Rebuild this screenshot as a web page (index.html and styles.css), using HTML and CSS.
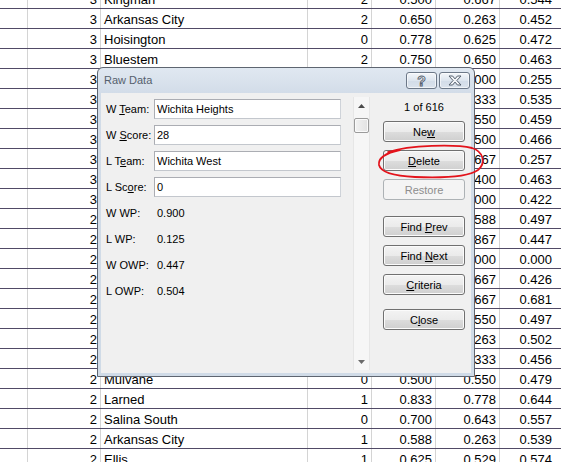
FILE: index.html
```html
<!DOCTYPE html>
<html>
<head>
<meta charset="utf-8">
<title>Raw Data</title>
<link rel="stylesheet" href="styles.css">
</head>
<body>
<div class="sheet">
  <div class="row"><div class="c"></div><div class="c r">3</div><div class="c t">Kingman</div><div class="c r">2</div><div class="c r">0.500</div><div class="c r">0.667</div><div class="c r g">0.544</div></div>
  <div class="row"><div class="c"></div><div class="c r">3</div><div class="c t">Arkansas City</div><div class="c r">2</div><div class="c r">0.650</div><div class="c r">0.263</div><div class="c r g">0.452</div></div>
  <div class="row"><div class="c"></div><div class="c r">3</div><div class="c t">Hoisington</div><div class="c r">0</div><div class="c r">0.778</div><div class="c r">0.625</div><div class="c r g">0.472</div></div>
  <div class="row"><div class="c"></div><div class="c r">3</div><div class="c t">Bluestem</div><div class="c r">2</div><div class="c r">0.750</div><div class="c r">0.650</div><div class="c r g">0.463</div></div>
  <div class="row"><div class="c"></div><div class="c r">3</div><div class="c t"></div><div class="c r"></div><div class="c r"></div><div class="c r">0.000</div><div class="c r g">0.255</div></div>
  <div class="row"><div class="c"></div><div class="c r">3</div><div class="c t"></div><div class="c r"></div><div class="c r"></div><div class="c r">0.333</div><div class="c r g">0.535</div></div>
  <div class="row"><div class="c"></div><div class="c r">3</div><div class="c t"></div><div class="c r"></div><div class="c r"></div><div class="c r">0.550</div><div class="c r g">0.459</div></div>
  <div class="row"><div class="c"></div><div class="c r">3</div><div class="c t"></div><div class="c r"></div><div class="c r"></div><div class="c r">0.500</div><div class="c r g">0.466</div></div>
  <div class="row"><div class="c"></div><div class="c r">3</div><div class="c t"></div><div class="c r"></div><div class="c r"></div><div class="c r">0.667</div><div class="c r g">0.257</div></div>
  <div class="row"><div class="c"></div><div class="c r">3</div><div class="c t"></div><div class="c r"></div><div class="c r"></div><div class="c r">0.400</div><div class="c r g">0.463</div></div>
  <div class="row"><div class="c"></div><div class="c r">3</div><div class="c t"></div><div class="c r"></div><div class="c r"></div><div class="c r">0.000</div><div class="c r g">0.422</div></div>
  <div class="row"><div class="c"></div><div class="c r">2</div><div class="c t"></div><div class="c r"></div><div class="c r"></div><div class="c r">0.588</div><div class="c r g">0.497</div></div>
  <div class="row"><div class="c"></div><div class="c r">2</div><div class="c t"></div><div class="c r"></div><div class="c r"></div><div class="c r">0.867</div><div class="c r g">0.447</div></div>
  <div class="row"><div class="c"></div><div class="c r">2</div><div class="c t"></div><div class="c r"></div><div class="c r"></div><div class="c r">0.000</div><div class="c r g">0.000</div></div>
  <div class="row"><div class="c"></div><div class="c r">2</div><div class="c t"></div><div class="c r"></div><div class="c r"></div><div class="c r">0.667</div><div class="c r g">0.426</div></div>
  <div class="row"><div class="c"></div><div class="c r">2</div><div class="c t"></div><div class="c r"></div><div class="c r"></div><div class="c r">0.667</div><div class="c r g">0.681</div></div>
  <div class="row"><div class="c"></div><div class="c r">2</div><div class="c t"></div><div class="c r"></div><div class="c r"></div><div class="c r">0.550</div><div class="c r g">0.497</div></div>
  <div class="row"><div class="c"></div><div class="c r">2</div><div class="c t"></div><div class="c r"></div><div class="c r"></div><div class="c r">0.263</div><div class="c r g">0.502</div></div>
  <div class="row"><div class="c"></div><div class="c r">2</div><div class="c t"></div><div class="c r"></div><div class="c r"></div><div class="c r">0.333</div><div class="c r g">0.456</div></div>
  <div class="row"><div class="c"></div><div class="c r">2</div><div class="c t">Mulvane</div><div class="c r">0</div><div class="c r">0.500</div><div class="c r">0.550</div><div class="c r g">0.479</div></div>
  <div class="row"><div class="c"></div><div class="c r">2</div><div class="c t">Larned</div><div class="c r">1</div><div class="c r">0.833</div><div class="c r">0.778</div><div class="c r g">0.644</div></div>
  <div class="row"><div class="c"></div><div class="c r">2</div><div class="c t">Salina South</div><div class="c r">0</div><div class="c r">0.700</div><div class="c r">0.643</div><div class="c r g">0.557</div></div>
  <div class="row"><div class="c"></div><div class="c r">2</div><div class="c t">Arkansas City</div><div class="c r">1</div><div class="c r">0.588</div><div class="c r">0.263</div><div class="c r g">0.539</div></div>
  <div class="row"><div class="c"></div><div class="c r">2</div><div class="c t">Ellis</div><div class="c r">1</div><div class="c r">0.625</div><div class="c r">0.529</div><div class="c r g">0.574</div></div>
</div>

<div class="dialog">
  <div class="titlebar">
    <div class="title">Raw Data</div>
    <div class="capbtn"><span class="qmark">?</span></div>
    <div class="capbtn">
      <svg class="xicon" width="14" height="11" viewBox="-1 -1 14 11"><path d="M0 0H3.6L6 2.9L8.4 0H12L7.9 4.5L12 9H8.4L6 6.1L3.6 9H0L4.1 4.5Z" fill="#f3f5f8" stroke="#55606e" stroke-width="1" stroke-linejoin="round"/></svg>
    </div>
  </div>
  <div class="body">
    <div class="form">
      <div class="lbl">W <u>T</u>eam:</div><div class="field">Wichita Heights</div>
      <div class="lbl">W <u>S</u>core:</div><div class="field">28</div>
      <div class="lbl">L T<u>e</u>am:</div><div class="field">Wichita West</div>
      <div class="lbl">L Sc<u>o</u>re:</div><div class="field">0</div>
      <div class="lbl">W WP:</div><div class="val">0.900</div>
      <div class="lbl">L WP:</div><div class="val">0.125</div>
      <div class="lbl">W OWP:</div><div class="val">0.447</div>
      <div class="lbl">L OWP:</div><div class="val">0.504</div>
    </div>
    <div class="scroll">
      <div class="arrow"><svg width="7" height="4" viewBox="0 0 7 4"><path d="M0 4H7L3.5 0Z" fill="#4a4a4a"/></svg></div>
      <div class="thumb"></div>
      <div class="spacer"></div>
      <div class="arrow down"><svg width="7" height="4" viewBox="0 0 7 4"><path d="M0 0H7L3.5 4Z" fill="#6a6a6a"/></svg></div>
    </div>
    <div class="side">
      <div class="count">1 of 616</div>
      <div class="btn first">Ne<u>w</u></div>
      <div class="btn"><u>D</u>elete</div>
      <div class="btn disabled">Restore</div>
      <div class="btn group">Find <u>P</u>rev</div>
      <div class="btn">Find <u>N</u>ext</div>
      <div class="btn"><u>C</u>riteria</div>
      <div class="btn last">C<u>l</u>ose</div>
    </div>
  </div>
</div>

<svg class="markup" width="561" height="462" viewBox="0 0 561 462">
  <path d="M388 152 C410 145 455 144 472 148 C484 152 486 163 478 170 C468 177 440 178 415 177 C395 176 381 173 379 165 C378 158 386 153 400 150" fill="none" stroke="#e3131b" stroke-width="1.8" stroke-linecap="round"/>
</svg>
</body>
</html>
```
FILE: styles.css
```css
html, body {
  margin: 0;
  padding: 0;
  background: #ffffff;
}
body {
  width: 561px;
  height: 462px;
  overflow: hidden;
  position: relative;
  font-family: "Liberation Sans", Arial, sans-serif;
}

/* spreadsheet */
.sheet {
  margin-top: -11px;
  font-size: 13px;
  color: #000;
}
.row {
  display: grid;
  grid-template-columns: 28px 73px 207px 64px 64px 64px 55px;
  height: 19px;
  border-bottom: 1px solid #514a66;
}
.c {
  box-sizing: border-box;
  border-right: 1px solid #d4d4d4;
  padding: 3px 3px 0 3px;
  line-height: 16px;
  white-space: nowrap;
  overflow: hidden;
}
.r { text-align: right; }
.t { text-align: left; }
.g { border-right: none; }

/* dialog window */
.dialog {
  position: absolute;
  left: 97px;
  top: 67px;
  width: 378px;
  height: 310px;
  box-sizing: border-box;
  border: 1px solid #5e6570;
  border-radius: 6px 6px 0 0;
  background: linear-gradient(#e0e8f1, #d2dce8 26px, #d0dbe7);
  padding: 0 3px 3px;
  display: flex;
  flex-direction: column;
  font-size: 11px;
  color: #000;
}
.titlebar {
  height: 25px;
  margin: 0 -3px;
  padding: 0 4px 0 6px;
  display: flex;
  align-items: flex-start;
}
.title {
  flex: 1;
  line-height: 25px;
  color: #55606d;
}
.capbtn {
  margin-top: 4px;
  width: 31px;
  height: 17px;
  box-sizing: border-box;
  border: 1px solid #6c7888;
  border-radius: 3px;
  background: linear-gradient(#f3f6fa, #dde5ee 50%, #d2dce8 51%, #dbe3ec);
  box-shadow: inset 0 0 0 1px rgba(255,255,255,0.6);
  display: flex;
  align-items: center;
  justify-content: center;
}
.capbtn + .capbtn { margin-left: 2px; }
.qmark {
  font-weight: bold;
  font-size: 14px;
  line-height: 14px;
  color: #f4f6f9;
  -webkit-text-stroke: 0.9px #55606e;
}
.xicon { display: block; }

.body {
  flex: 1;
  background: #f0f0f0;
  display: flex;
}

/* form */
.form {
  width: 252px;
  box-sizing: border-box;
  padding: 6px 0 0 5px;
  display: grid;
  grid-template-columns: 48px 187px;
  grid-auto-rows: 20px;
  row-gap: 6px;
  align-content: start;
}
.lbl {
  line-height: 20px;
  white-space: nowrap;
}
.field {
  box-sizing: border-box;
  height: 20px;
  border: 1px solid #abadb3;
  border-right-color: #cfd3d9;
  border-bottom-color: #c3c7cd;
  background: #ffffff;
  padding-left: 2px;
  line-height: 18px;
}
.val {
  line-height: 20px;
  padding-left: 3px;
}

/* scrollbar */
.scroll {
  width: 17px;
  box-sizing: border-box;
  margin-top: 4px;
  height: 273px;
  background: #f6f6f6;
  border-left: 1px solid #e6e6e6;
  border-right: 1px solid #e6e6e6;
  display: flex;
  flex-direction: column;
}
.arrow {
  height: 17px;
  display: flex;
  align-items: center;
  justify-content: center;
}
.arrow svg { display: block; }
.thumb {
  margin-top: 4px;
  height: 15px;
  box-sizing: border-box;
  border: 1px solid #9b9b9b;
  border-radius: 2px;
  background: linear-gradient(90deg, #f2f2f2, #e2e2e2);
  box-shadow: inset 0 0 0 1px #fafafa;
}
.spacer { flex: 1; }

/* right side buttons */
.side {
  flex: 1;
  box-sizing: border-box;
  padding: 6px 0 0 13px;
  display: flex;
  flex-direction: column;
}
.count {
  width: 82px;
  text-align: center;
  line-height: 16px;
}
.btn {
  width: 82px;
  height: 21px;
  box-sizing: border-box;
  border: 1px solid #707070;
  border-radius: 3px;
  background: linear-gradient(#f3f3f3, #ebebeb 50%, #dddddd 51%, #cfcfcf);
  box-shadow: inset 0 0 0 1px #fbfbfb;
  text-align: center;
  line-height: 20px;
  margin-top: 8px;
  white-space: nowrap;
}
.btn.first { margin-top: 6px; }
.btn.group { margin-top: 16px; }
.btn.last { margin-top: 14px; }
.btn.disabled {
  border-color: #adb2b5;
  background: #f4f4f4;
  box-shadow: none;
  color: #8d8d8d;
}

/* hand-drawn annotation */
.markup {
  position: absolute;
  left: 0;
  top: 0;
  pointer-events: none;
}
```
